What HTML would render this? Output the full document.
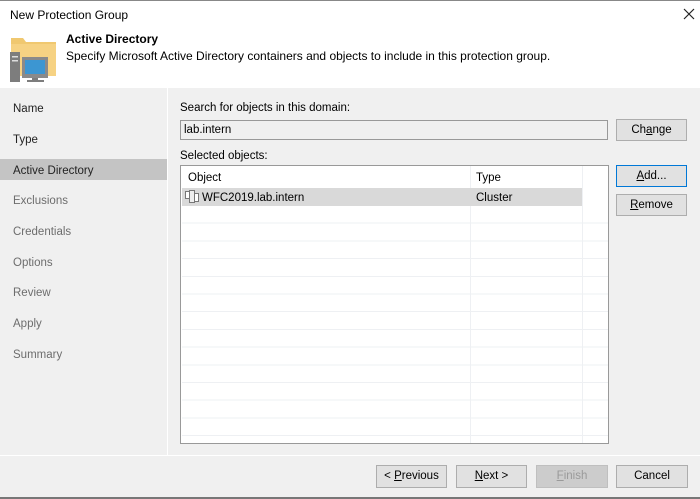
<!DOCTYPE html><html><head><style>
body{margin:0;width:700px;height:499px;overflow:hidden;font-family:"Liberation Sans",sans-serif;font-size:11.5px;color:#000;background:#f0f0f0;position:relative}
.a{position:absolute}
.btn{position:absolute;background:#e1e1e1;border:1px solid #adadad;box-sizing:border-box;text-align:center;font-size:11.5px;line-height:21px}
.nav{position:absolute;left:13px;color:#222}
.g{color:#6d6d6d}
u{text-decoration:underline}
</style></head><body>
<div class="a" style="left:0;top:0;width:700px;height:1px;background:#888"></div>
<div class="a" style="left:0;top:1px;width:700px;height:87px;background:#fff"></div>
<div class="a" style="left:10px;top:8px;font-size:12px">New Protection Group</div>
<svg class="a" style="left:683px;top:8px" width="12" height="12"><path d="M1 1L11 11M11 1L1 11" stroke="#222" stroke-width="1.2"/></svg>
<svg class="a" style="left:8px;top:34px" width="48" height="50">
<path d="M3 4h12l3 4h34v24H3z" fill="#f0c870"/>
<path d="M3 10h49v32H3z" fill="#f6d283"/>
<rect x="2" y="18" width="10" height="30" fill="#7d7d7d"/>
<rect x="4" y="22" width="6" height="1.5" fill="#ddd"/><rect x="4" y="26" width="6" height="1.5" fill="#ddd"/>
<rect x="14" y="23" width="26" height="21" fill="#8a8a8a"/><rect x="17" y="26" width="20" height="14" fill="#3c96d2"/>
<rect x="24" y="44" width="6" height="2" fill="#7d7d7d"/><rect x="19" y="46" width="17" height="2" fill="#7d7d7d"/>
</svg>
<div class="a" style="left:66px;top:32px;font-weight:bold;font-size:12px">Active Directory</div>
<div class="a" style="left:66px;top:49px;font-size:12px">Specify Microsoft Active Directory containers and objects to include in this protection group.</div>
<div class="a" style="left:0;top:88px;width:167px;height:367px;background:#f0f0f0"></div>
<div class="a" style="left:167px;top:88px;width:1px;height:367px;background:#fff"></div>
<div class="a" style="left:0;top:159px;width:167px;height:21px;background:#c4c4c4"></div>
<div class="nav" style="top:103px">Name</div>
<div class="nav" style="top:134px">Type</div>
<div class="nav" style="top:165px">Active Directory</div>
<div class="nav g" style="top:195px">Exclusions</div>
<div class="nav g" style="top:226px">Credentials</div>
<div class="nav g" style="top:257px">Options</div>
<div class="nav g" style="top:287px">Review</div>
<div class="nav g" style="top:318px">Apply</div>
<div class="nav g" style="top:349px">Summary</div>
<div class="a" style="left:180px;top:102px">Search for objects in this domain:</div>
<div class="a" style="left:180px;top:120px;width:428px;height:20px;border:1px solid #999;box-sizing:border-box;background:#f0f0f0;padding:3px 3px">lab.intern</div>
<div class="btn" style="left:616px;top:119px;width:71px;height:22px">Ch<u>a</u>nge</div>
<div class="a" style="left:180px;top:150px">Selected objects:</div>
<div class="a" style="left:180px;top:165px;width:429px;height:279px;border:1px solid #999;box-sizing:border-box;background:#fff;overflow:hidden">
<div class="a" style="left:289px;top:0;width:1px;height:277px;background:#eef0f3"></div>
<div class="a" style="left:401px;top:0;width:1px;height:277px;background:#eef0f3"></div>
<div class="a" style="left:7px;top:6px">Object</div><div class="a" style="left:295px;top:6px">Type</div>
<div class="a" style="left:1px;top:22px;width:400px;height:18px;background:#d9d9d9"></div>
<svg class="a" style="left:4px;top:24px" width="14" height="14"><rect x="0.5" y="1.5" width="5" height="7" fill="#fff" stroke="#777"/><rect x="4.5" y="0.5" width="5" height="12" fill="#eee" stroke="#777"/><rect x="9.5" y="3.5" width="4" height="8" fill="#fff" stroke="#777"/></svg>
<div class="a" style="left:21px;top:26px">WFC2019.lab.intern</div><div class="a" style="left:295px;top:26px">Cluster</div>
<div style="position:absolute;left:1px;top:40px;width:426px;height:240px;background:repeating-linear-gradient(#fff 0,#fff 16.7px,#eef0f3 16.7px,#eef0f3 17.7px)"></div>
<div class="a" style="left:289px;top:40px;width:1px;height:240px;background:#eef0f3"></div>
<div class="a" style="left:401px;top:40px;width:1px;height:240px;background:#eef0f3"></div>
</div>
<div class="btn" style="left:616px;top:165px;width:71px;height:22px;border:1px solid #0078d7"><u>A</u>dd...</div>
<div class="btn" style="left:616px;top:194px;width:71px;height:22px"><u>R</u>emove</div>
<div class="a" style="left:0;top:455px;width:700px;height:1px;background:#fff"></div>
<div class="btn" style="left:376px;top:465px;width:71px;height:23px">&lt; <u>P</u>revious</div>
<div class="btn" style="left:456px;top:465px;width:71px;height:23px"><u>N</u>ext &gt;</div>
<div class="btn" style="left:536px;top:465px;width:72px;height:23px;background:#cccccc;border-color:#bfbfbf;color:#9a9a9a"><u>F</u>inish</div>
<div class="btn" style="left:616px;top:465px;width:72px;height:23px">Cancel</div>
<div class="a" style="left:0;top:497px;width:700px;height:2px;background:#777"></div>
</body></html>
